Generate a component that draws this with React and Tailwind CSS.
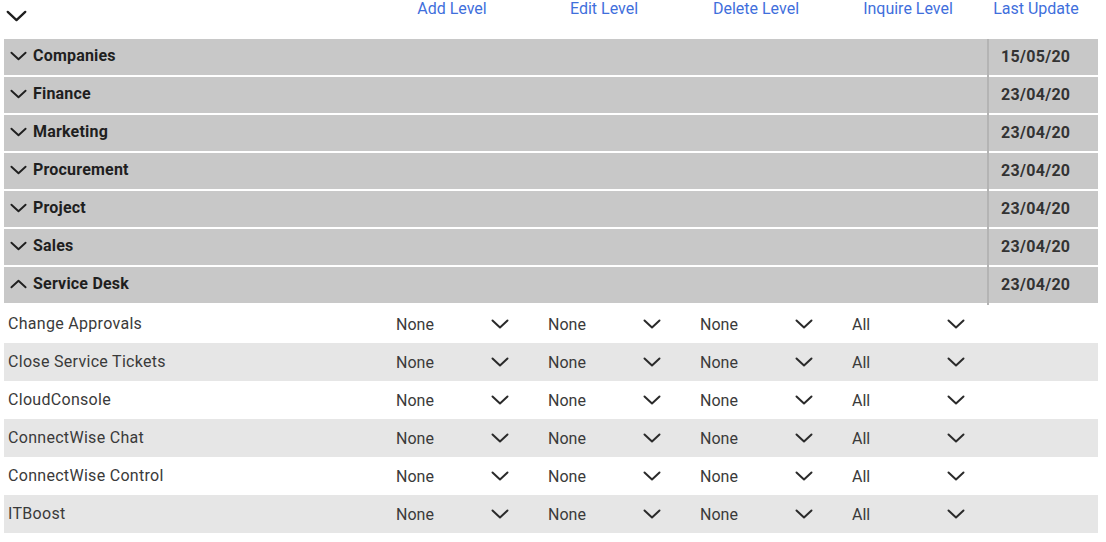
import React from "react";

const groups = [
  { name: "Companies", date: "15/05/20" },
  { name: "Finance", date: "23/04/20" },
  { name: "Marketing", date: "23/04/20" },
  { name: "Procurement", date: "23/04/20" },
  { name: "Project", date: "23/04/20" },
  { name: "Sales", date: "23/04/20" },
  { name: "Service Desk", date: "23/04/20", open: true },
];

const items = [
  "Change Approvals",
  "Close Service Tickets",
  "CloudConsole",
  "ConnectWise Chat",
  "ConnectWise Control",
  "ITBoost",
];

const levels = ["None", "None", "None", "All"];

function Chevron({ up, className, width = 2 }) {
  return (
    <svg viewBox="0 0 18 10" fill="none" className={className}>
      <path
        d={up ? "M1.5 8.5 L9 1.5 L16.5 8.5" : "M1.5 1.5 L9 8.5 L16.5 1.5"}
        stroke="currentColor"
        strokeWidth={width}
        strokeLinecap="round"
        strokeLinejoin="round"
      />
    </svg>
  );
}

function GroupRow({ group }) {
  return (
    <div className="flex h-[38px]">
      <div className="flex-1 flex items-center bg-[#c8c8c8] border-b-2 border-white pl-[6px] pb-[2px]">
        <Chevron up={group.open} className="w-[17px] h-[10px] text-[#1f1f1f] mr-[6px]" />
        <span className="text-[16px] font-bold text-[#1f1f1f] tracking-[0.2px]">{group.name}</span>
      </div>
      <div className="w-[2px] bg-[#b4b4b4]" />
      <div className="w-[109px] flex items-center bg-[#c8c8c8] border-b-2 border-white pl-[12px] pb-[1px]">
        <span className="text-[16px] font-bold text-[#333] tracking-[0.3px]">{group.date}</span>
      </div>
    </div>
  );
}

function ItemRow({ name, odd }) {
  return (
    <div className={"flex items-center h-[38px] " + (odd ? "bg-[#e6e6e6]" : "bg-white")}>
      <div className="w-[386px] pl-[4px] text-[16px] text-[#3a3a3a] tracking-[0.3px]">{name}</div>
      {levels.map((lv, i) => (
        <div key={i} className="w-[152px] flex">
          <div className="w-[124px] flex items-center justify-between pl-[6px] pr-[5px]">
            <span className="text-[16px] text-[#3a3a3a] pt-[2px]">{lv}</span>
            <Chevron className="w-[18px] h-[10px] text-[#2a2a2a]" />
          </div>
        </div>
      ))}
    </div>
  );
}

export default function App() {
  return (
    <div className="w-[1106px] h-[542px] bg-white px-[4px] pr-[8px] font-['Roboto',sans-serif]">
      {/* Header */}
      <div className="flex items-start h-[39px] leading-[18px] text-[16px] text-[#3f6fdc]">
        <div className="w-[386px] pt-[10px] pl-[2px]">
          <Chevron className="w-[21px] h-[12px] text-[#1f1f1f]" />
        </div>
        {["Add Level", "Edit Level", "Delete Level"].map((h) => (
          <div key={h} className="w-[152px]">
            <div className="w-[124px] text-center">{h}</div>
          </div>
        ))}
        <div className="w-[141px]">
          <div className="w-[124px] text-center">Inquire Level</div>
        </div>
        <div className="w-[98px] text-center">Last Update</div>
      </div>

      {groups.map((g) => (
        <GroupRow key={g.name} group={g} />
      ))}

      {items.map((n, i) => (
        <ItemRow key={n} name={n} odd={i % 2 === 1} />
      ))}
    </div>
  );
}
